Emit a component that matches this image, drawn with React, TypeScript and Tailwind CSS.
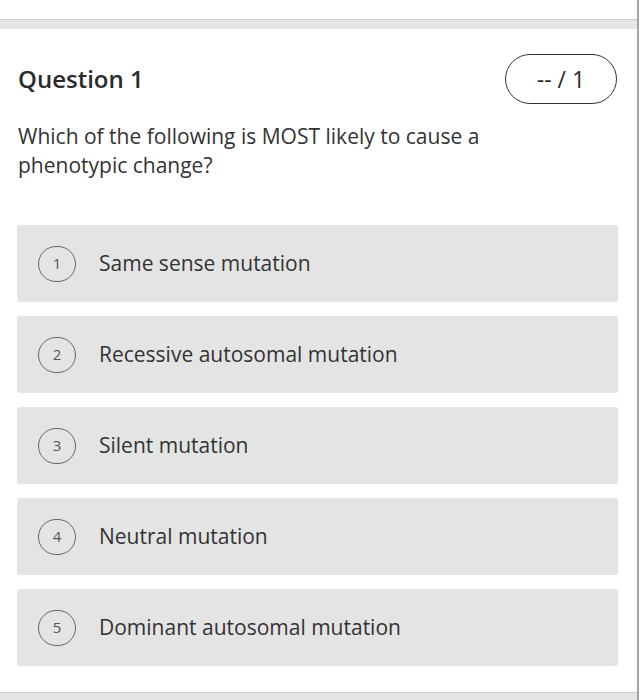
const opciones = [
  'Same sense mutation',
  'Recessive autosomal mutation',
  'Silent mutation',
  'Neutral mutation',
  'Dominant autosomal mutation',
];

export default function App() {
  return (
    <div
      className="flex w-[640px] h-[700px] bg-white overflow-hidden text-[#333]"
      style={{ fontFamily: '"Open Sans", "Noto Sans", sans-serif' }}
    >
      <div className="flex flex-col w-[639px] h-full border-r-2 border-[#a3a3a3]">
        <div className="h-[19px] shrink-0" />
        <div className="h-[10px] shrink-0 border-t border-[#cdcdcd] bg-[#e5e5e5]" />

        <div className="flex items-center justify-between mt-[25px] pl-[18px] pr-[20px]">
          <h1 className="text-[24px] font-semibold text-[#2b2b2b]">Question 1</h1>
          <div className="flex items-center justify-center w-[112px] h-[50px] rounded-full border-[1.5px] border-[#333] text-[23px] text-[#2b2b2b]">
            -- / 1
          </div>
        </div>

        <p className="mt-[18px] px-[18px] text-[21px] leading-[29px] text-[#333]">
          Which of the following is MOST likely to cause a
          <br />
          phenotypic change?
        </p>

        <div className="flex flex-col gap-[14px] mt-[45px] ml-[17px] mr-[19px]">
          {opciones.map((texto, i) => (
            <div
              key={texto}
              className="flex items-center h-[77px] pl-[21px] rounded-[3px] bg-[#e4e4e4]"
            >
              <span className="flex items-center justify-center w-[38px] h-[36px] rounded-full border-[1.5px] border-[#666] text-[15px] text-[#555]">
                {i + 1}
              </span>
              <span className="ml-[23px] text-[21px] text-[#333]">{texto}</span>
            </div>
          ))}
        </div>

        <div className="mt-auto h-[8px] shrink-0 border-t border-[#cdcdcd] bg-[#e5e5e5]" />
      </div>
    </div>
  );
}
